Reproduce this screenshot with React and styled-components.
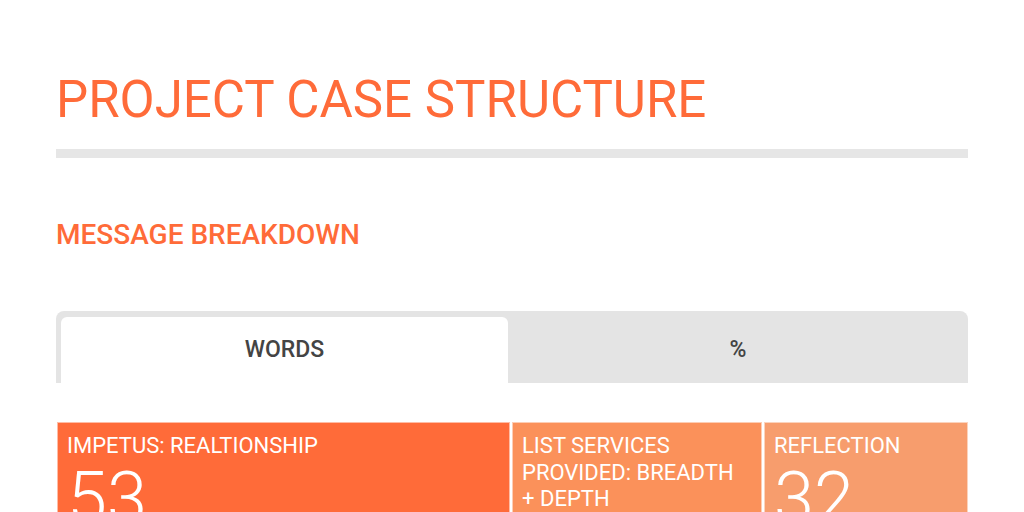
import React from 'react';
import styled, { createGlobalStyle } from 'styled-components';

const GlobalStyle = createGlobalStyle`
  html, body {
    margin: 0;
    padding: 0;
    background: #fff;
    font-family: Roboto, "Liberation Sans", sans-serif;
  }
`;

const Page = styled.div`
  padding: 0 56px;
`;

const Title = styled.h1`
  margin: 0;
  padding-top: 70px;
  font-size: 51px;
  line-height: 60px;
  font-weight: 400;
  color: #ff6b39;
`;

const Divider = styled.div`
  height: 9px;
  background: #e6e6e6;
  margin-top: 19px;
`;

const Subtitle = styled.h2`
  margin: 61px 0 0;
  font-size: 28px;
  line-height: 32px;
  font-weight: 500;
  color: #ff6b39;
`;

const Tabs = styled.div`
  margin-top: 60px;
  display: grid;
  grid-template-columns: 447px 1fr;
  padding: 6px 0 0 5px;
  background: #e4e4e4;
  border-radius: 8px 8px 0 0;
  height: 66px;
`;

const Tab = styled.div`
  display: flex;
  align-items: center;
  justify-content: center;
  background: ${p => (p.active ? '#fff' : 'transparent')};
  border-radius: 6px 6px 0 0;
  font-size: 23px;
  font-weight: 500;
  color: #444;
  padding-bottom: 2px;
`;

const Cards = styled.div`
  margin: 39px 0 0 1px;
  display: flex;
  gap: 2px;
`;

const Card = styled.div`
  width: ${p => p.w};
  flex: ${p => (p.w === 'auto' ? '1 1 0' : 'none')};
  background: ${p => p.color};
  border: 1px solid rgba(255, 255, 255, 0.55);
  color: #fff;
  padding: 10px 10px 0 9px;
  height: 120px;
  box-sizing: border-box;
  overflow: hidden;
`;

const Label = styled.div`
  font-size: 22px;
  line-height: 26.5px;
  font-weight: 400;
  text-transform: uppercase;
`;

const Value = styled.div`
  font-size: 72px;
  line-height: 72px;
  font-weight: 300;
  margin-top: 3px;
`;

const cards = [
  { label: 'Impetus: Realtionship', value: 53, color: '#ff6b39', w: '453px' },
  { label: 'List services provided: breadth + depth', value: 15, color: '#fb915a', w: '250px' },
  { label: 'Reflection', value: 32, color: '#f79d6d', w: 'auto' },
];

export default function App() {
  return (
    <>
      <GlobalStyle />
      <Page>
        <Title>PROJECT CASE STRUCTURE</Title>
        <Divider />
        <Subtitle>MESSAGE BREAKDOWN</Subtitle>
        <Tabs>
          <Tab active>WORDS</Tab>
          <Tab>%</Tab>
        </Tabs>
        <Cards>
          {cards.map(c => (
            <Card key={c.label} color={c.color} w={c.w}>
              <Label>{c.label}</Label>
              <Value>{c.value}</Value>
            </Card>
          ))}
        </Cards>
      </Page>
    </>
  );
}
